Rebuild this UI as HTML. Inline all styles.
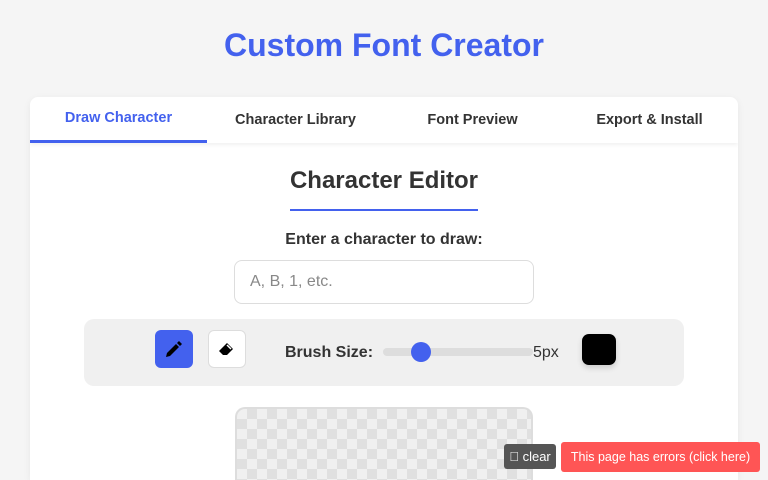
<!DOCTYPE html>
<html><head><style>
html,body{margin:0;height:480px;overflow:hidden}
body{background:#f5f5f5;font-family:"Liberation Sans",sans-serif;width:768px;position:relative}
h1{position:absolute;top:26px;left:0;width:768px;text-align:center;margin:0;font-size:32px;color:#4361ee;font-weight:bold;line-height:38px}
.card{position:absolute;left:30px;top:97px;width:708px;height:383px;background:#fff;border-radius:8px 8px 0 0;box-shadow:0 2px 8px rgba(0,0,0,.06);overflow:hidden}
.tabs{position:absolute;top:0;left:0;width:708px;height:46px;box-shadow:0 2px 4px rgba(0,0,0,.06)}
.tab{position:absolute;top:0;width:177px;height:46px;text-align:center;font-weight:bold;font-size:14.5px;color:#333;line-height:46px}
.tab.a{color:#4361ee;line-height:42px;border-bottom:3px solid #4361ee;height:43px}
.h2{position:absolute;left:200px;top:69px;width:308px;text-align:center;font-size:24px;font-weight:bold;color:#333;line-height:30px;white-space:nowrap}
.ul{position:absolute;left:260px;top:112px;width:188px;height:2px;background:#4361ee}
.lbl{position:absolute;left:0;width:708px;top:134px;text-align:center;font-weight:bold;font-size:16px;color:#333}
.inp{position:absolute;left:204px;top:163px;border:1px solid #ddd;border-radius:8px;box-sizing:border-box;width:300px;height:44px;font-size:16px;color:#888;padding:12px 15px}
.tool{position:absolute;left:54px;top:222px;width:600px;height:67px;background:#f0f0f0;border-radius:10px}
.b{position:absolute;top:11px;width:38px;height:38px;border-radius:6px;box-sizing:border-box}
.bs{position:absolute;left:201px;top:25px;font-weight:bold;font-size:16px;color:#333}
.tr{position:absolute;left:299px;top:29px;width:150px;height:8px;background:#ddd;border-radius:4px}
.th{position:absolute;left:327px;top:23px;width:20px;height:20px;border-radius:50%;background:#4361ee}
.px{position:absolute;left:449px;top:25px;font-size:16px;color:#333}
.sw{position:absolute;left:498px;top:15px;width:34px;height:31px;background:#000;border-radius:7px;box-shadow:0 3px 6px rgba(0,0,0,.15)}
.cv{position:absolute;left:205px;top:310px;width:298px;height:73px;border:2px solid #ddd;border-bottom:none;border-radius:10px 10px 0 0;box-sizing:border-box;background-color:#f0f0f0;background-image:linear-gradient(45deg,#e0e0e0 25%,transparent 25%,transparent 75%,#e0e0e0 75%),linear-gradient(45deg,#e0e0e0 25%,transparent 25%,transparent 75%,#e0e0e0 75%);background-size:20px 20px;background-position:0 0,10px 10px}
.e1{position:absolute;left:504px;top:444px;width:52px;height:25px;background:#555;color:#fff;font-size:13px;line-height:25px;text-align:center;border-radius:3px}
.e2{position:absolute;left:561px;top:442px;width:199px;height:30px;background:#f55;color:#fff;font-size:12.5px;line-height:30px;text-align:center;border-radius:3px;white-space:nowrap}
</style></head><body>
<h1>Custom Font Creator</h1>
<div class="card">
<div class="tabs">
<div class="tab a" style="left:0">Draw Character</div>
<div class="tab" style="left:177px">Character Library</div>
<div class="tab" style="left:354px">Font Preview</div>
<div class="tab" style="left:531px">Export &amp; Install</div>
</div>
<div class="h2">Character Editor</div>
<div class="ul"></div>
<div class="lbl">Enter a character to draw:</div>
<div class="inp">A, B, 1, etc.</div>
<div class="tool">
<div class="b" style="left:71px;background:#4361ee"><svg width="38" height="38" viewBox="0 0 38 38"><path d="M11 27l1-4 9-9 3 3-9 9z M22 13l2-2 3 3-2 2z" fill="#000"/></svg></div>
<div class="b" style="left:124px;background:#fff;border:1px solid #ddd"><svg width="36" height="36" viewBox="0 0 36 36"><path d="M10 20l8-8 6 6-6 6h-4z" fill="#000"/><path d="M18 14l4 4" stroke="#fff" stroke-width="1.5"/></svg></div>
<div class="bs">Brush Size:</div>
<div class="tr"></div><div class="th"></div>
<div class="px">5px</div>
<div class="sw"></div>
</div>
<div class="cv"></div>
</div>
<div class="e1">&#xf00d; clear</div>
<div class="e2">This page has errors (click here)</div>
</body></html>
